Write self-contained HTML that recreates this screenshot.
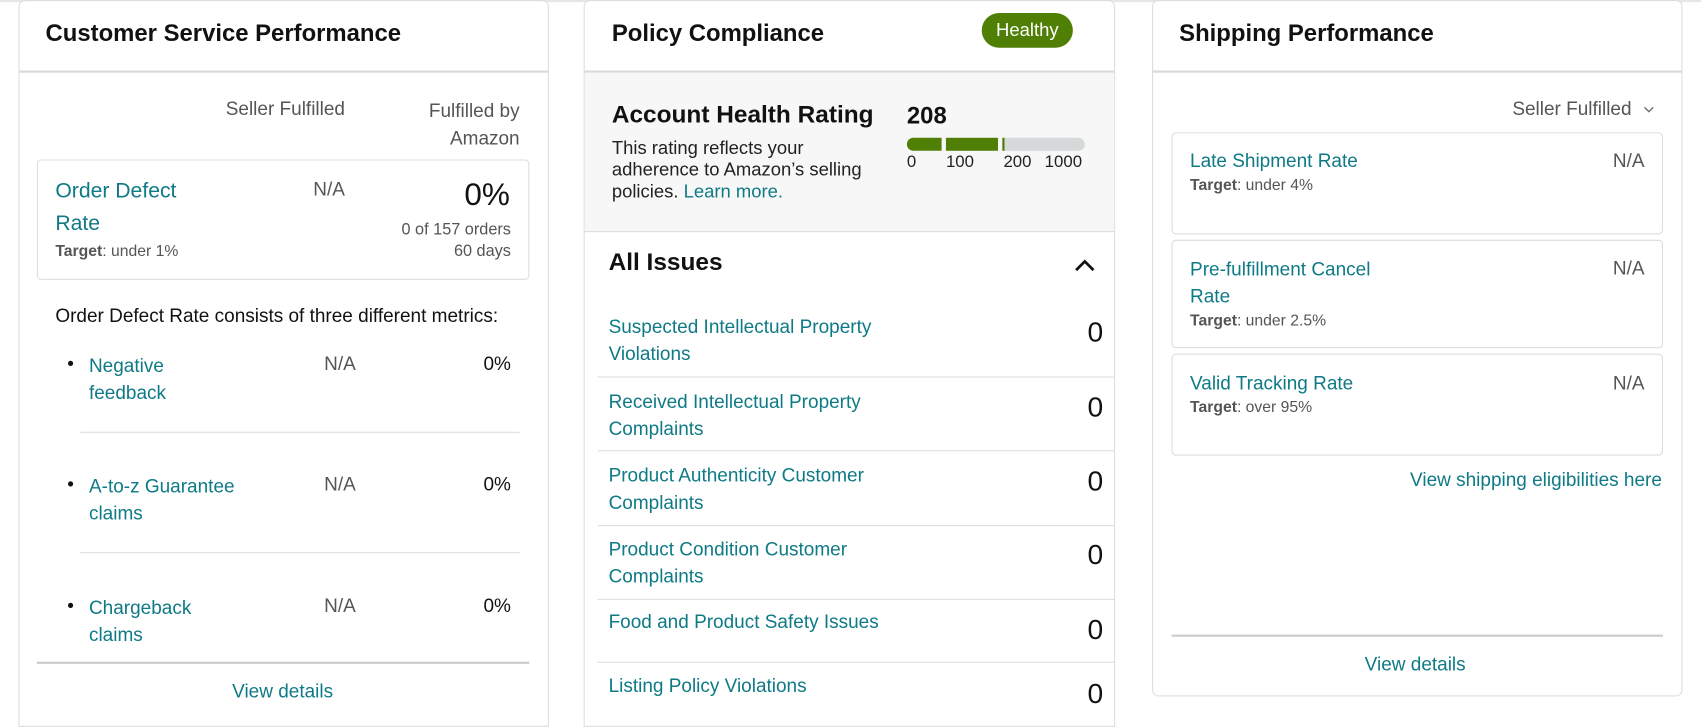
<!DOCTYPE html>
<html><head><meta charset="utf-8"><style>
html,body{margin:0;padding:0;background:#fff;width:1701px;height:708px;overflow:hidden}
#w{position:absolute;left:0;top:0;width:1568px;height:653px;transform:scale(1.0848);transform-origin:0 0;font-family:"Liberation Sans",Arial,sans-serif;color:#111}
.a{position:absolute;white-space:nowrap}
.card{position:absolute;border:1px solid #ddd;border-radius:6px;background:#fff;box-sizing:border-box}
.hd{position:absolute;left:0;right:0;top:0;height:64px;border-bottom:2px solid #d9d9d9}
.t{font-weight:bold;font-size:22px}
.l{color:#0e7a86}
.g{color:#555}
.r{text-align:right}
.box{position:absolute;border:1px solid #ddd;border-radius:4px;box-sizing:border-box}
.hl{position:absolute;height:1px;background:#ddd}
.z{font-size:26px;color:#111}
.f{font-size:17.5px}
.s{font-size:14.5px}
</style></head><body><div id="w">
<div class="a" style="left:0;top:0;width:1568px;height:2px;background:#e6e6e6"></div>

<!-- card 1 -->
<div class="card" style="left:17px;top:0;width:489px;height:670px;border-radius:6px 6px 0 0">
<div class="hd"></div></div>
<div class="a t" style="left:42px;top:18px">Customer Service Performance</div>
<div class="a g f" style="right:1250px;top:90px">Seller Fulfilled</div>
<div class="a g r f" style="right:1089px;top:90px;line-height:25px">Fulfilled by<br>Amazon</div>
<div class="box" style="left:34px;top:147px;width:454px;height:111px"></div>
<div class="a l" style="left:51px;top:161px;font-size:19.5px;line-height:30px">Order Defect<br>Rate</div>
<div class="a g s" style="left:51px;top:224px"><b>Target</b>: under 1%</div>
<div class="a g f" style="right:1250px;top:164px">N/A</div>
<div class="a" style="right:1098px;top:164px;font-size:29px">0%</div>
<div class="a g r" style="right:1097px;top:202px;font-size:15px;line-height:20px">0 of 157 orders<br>60 days</div>
<div class="a f" style="left:51px;top:281px">Order Defect Rate consists of three different metrics:</div>

<div class="a f" style="left:62px;top:325px">•</div>
<div class="a l f" style="left:82px;top:325px;line-height:25px">Negative<br>feedback</div>
<div class="a g f" style="right:1240px;top:325px">N/A</div>
<div class="a f" style="right:1097px;top:325px">0%</div>
<div class="hl" style="left:74px;top:398px;width:405px"></div>
<div class="a f" style="left:62px;top:436px">•</div>
<div class="a l f" style="left:82px;top:436px;line-height:25px">A-to-z Guarantee<br>claims</div>
<div class="a g f" style="right:1240px;top:436px">N/A</div>
<div class="a f" style="right:1097px;top:436px">0%</div>
<div class="hl" style="left:74px;top:509px;width:405px"></div>
<div class="a f" style="left:62px;top:548px">•</div>
<div class="a l f" style="left:82px;top:548px;line-height:25px">Chargeback<br>claims</div>
<div class="a g f" style="right:1240px;top:548px">N/A</div>
<div class="a f" style="right:1097px;top:548px">0%</div>
<div class="a" style="left:34px;top:610px;width:454px;height:2px;background:#ccc"></div>
<div class="a l f" style="left:214px;top:627px">View details</div>

<!-- card 2 -->
<div class="card" style="left:538px;top:0;width:490px;height:670px;border-radius:6px 6px 0 0">
<div class="hd"></div></div>
<div class="a t" style="left:564px;top:18px">Policy Compliance</div>
<div class="a" style="left:905px;top:12px;width:84px;height:32px;border-radius:16px;background:#4f7f05;color:#fff;font-size:17px;text-align:center;line-height:31px">Healthy</div>
<div class="a" style="left:539px;top:67px;width:488px;height:146px;background:#f7f7f7;border-bottom:1px solid #ddd"></div>
<div class="a" style="left:564px;top:93px;font-size:22.5px;font-weight:bold">Account Health Rating</div>
<div class="a" style="left:564px;top:127px;font-size:17px;line-height:20px;color:#222">This rating reflects your<br>adherence to Amazon’s selling<br>policies. <span class="l">Learn more.</span></div>
<div class="a" style="left:836px;top:94px;font-size:22px;font-weight:bold">208</div>
<div class="a" style="left:836px;top:127px;width:32px;height:12px;background:#4f7f05;border-radius:6px 0 0 6px"></div>
<div class="a" style="left:872px;top:127px;width:48px;height:12px;background:#4f7f05"></div>
<div class="a" style="left:924px;top:127px;width:76px;height:12px;background:#d5d9d9;border-radius:0 6px 6px 0"></div>
<div class="a" style="left:924px;top:127px;width:2px;height:12px;background:#4f7f05"></div>
<div class="a" style="left:836px;top:141px;font-size:15.5px;color:#222">0</div>
<div class="a" style="left:872px;top:141px;font-size:15.5px;color:#222">100</div>
<div class="a" style="left:925px;top:141px;font-size:15.5px;color:#222">200</div>
<div class="a" style="left:963px;top:141px;font-size:15.5px;color:#222">1000</div>
<div class="a" style="left:561px;top:229px;font-size:22.5px;font-weight:bold">All Issues</div>
<svg class="a" style="left:990px;top:238px" width="20" height="14"><path d="M2 11 L10 3 L18 11" fill="none" stroke="#111" stroke-width="2.5"/></svg>

<div class="a l f" style="left:561px;top:289px;line-height:25px">Suspected Intellectual Property<br>Violations</div>
<div class="a z" style="right:551px;top:291px">0</div>
<div class="hl" style="left:551px;top:347px;width:476px"></div>
<div class="a l f" style="left:561px;top:358px;line-height:25px">Received Intellectual Property<br>Complaints</div>
<div class="a z" style="right:551px;top:360px">0</div>
<div class="hl" style="left:551px;top:415px;width:476px"></div>
<div class="a l f" style="left:561px;top:426px;line-height:25px">Product Authenticity Customer<br>Complaints</div>
<div class="a z" style="right:551px;top:428px">0</div>
<div class="hl" style="left:551px;top:484px;width:476px"></div>
<div class="a l f" style="left:561px;top:494px;line-height:25px">Product Condition Customer<br>Complaints</div>
<div class="a z" style="right:551px;top:496px">0</div>
<div class="hl" style="left:551px;top:552px;width:476px"></div>
<div class="a l f" style="left:561px;top:563px">Food and Product Safety Issues</div>
<div class="a z" style="right:551px;top:565px">0</div>
<div class="hl" style="left:551px;top:610px;width:476px"></div>
<div class="a l f" style="left:561px;top:622px">Listing Policy Violations</div>
<div class="a z" style="right:551px;top:624px">0</div>

<!-- card 3 -->
<div class="card" style="left:1062px;top:0;width:489px;height:642px">
<div class="hd"></div></div>
<div class="a t" style="left:1087px;top:18px">Shipping Performance</div>
<div class="a g f" style="right:64px;top:90px">Seller Fulfilled</div>
<svg class="a" style="left:1515px;top:97px" width="10" height="8"><path d="M1 2 L5 6 L9 2" fill="none" stroke="#666" stroke-width="1.2"/></svg>
<div class="box" style="left:1080px;top:122px;width:453px;height:94px"></div>
<div class="a l f" style="left:1097px;top:138px">Late Shipment Rate</div>
<div class="a g s" style="left:1097px;top:163px"><b>Target</b>: under 4%</div>
<div class="a g f" style="right:52px;top:138px">N/A</div>
<div class="box" style="left:1080px;top:221px;width:453px;height:100px"></div>
<div class="a l f" style="left:1097px;top:236px;line-height:25px">Pre-fulfillment Cancel<br>Rate</div>
<div class="a g s" style="left:1097px;top:288px"><b>Target</b>: under 2.5%</div>
<div class="a g f" style="right:52px;top:237px">N/A</div>
<div class="box" style="left:1080px;top:326px;width:453px;height:94px"></div>
<div class="a l f" style="left:1097px;top:343px">Valid Tracking Rate</div>
<div class="a g s" style="left:1097px;top:368px"><b>Target</b>: over 95%</div>
<div class="a g f" style="right:52px;top:343px">N/A</div>
<div class="a l f" style="right:36px;top:432px">View shipping eligibilities here</div>
<div class="a" style="left:1080px;top:585px;width:453px;height:2px;background:#ccc"></div>
<div class="a l f" style="left:1258px;top:602px">View details</div>
</div></body></html>
